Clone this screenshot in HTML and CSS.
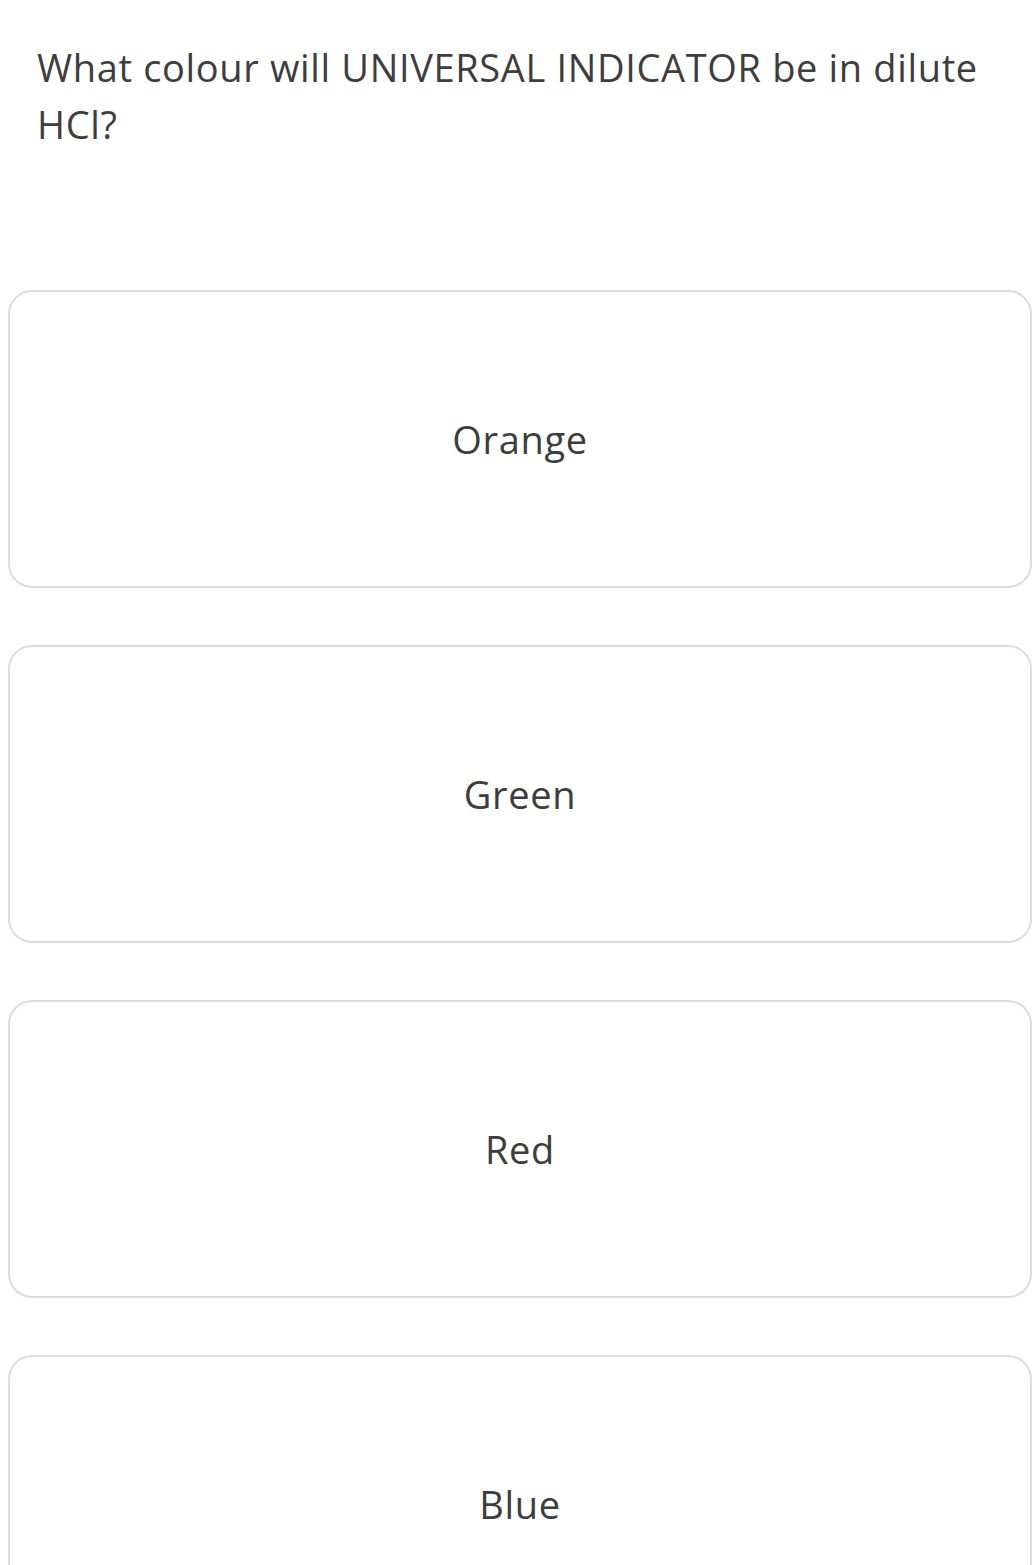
FILE: index.html
```html
<!DOCTYPE html>
<html>
<head>
<meta charset="utf-8">
<link rel="stylesheet" href="styles.css">
</head>
<body>
<div class="page">
  <div class="question">What colour will UNIVERSAL INDICATOR be in dilute HCl?</div>
  <div class="options">
    <div class="option">Orange</div>
    <div class="option">Green</div>
    <div class="option">Red</div>
    <div class="option">Blue</div>
  </div>
</div>
</body>
</html>
```
FILE: styles.css
```css
html, body {
  margin: 0;
  padding: 0;
  background: #fff;
}
.page {
  font-family: "Open Sans", "Noto Sans", sans-serif;
  color: #3d3d3d;
  letter-spacing: 0.65px;
}
.question {
  padding: 39px 37px 0 37px;
  font-size: 38px;
  line-height: 57px;
}
.options {
  margin: 137px 1px 0 8px;
  display: flex;
  flex-direction: column;
  gap: 57px;
}
.option {
  box-sizing: border-box;
  height: 298px;
  border: 2px solid #dcdcdc;
  border-radius: 24px;
  display: flex;
  align-items: center;
  justify-content: center;
  font-size: 38px;
}
```
